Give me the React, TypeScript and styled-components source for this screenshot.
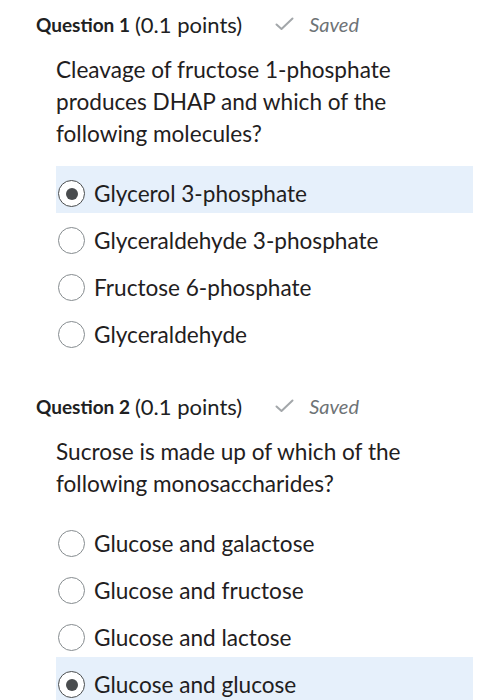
import styled, { createGlobalStyle } from 'styled-components'

const GlobalStyle = createGlobalStyle`
  html, body {
    margin: 0;
    padding: 0;
    background: #ffffff;
  }
  body {
    font-family: Lato, 'Open Sans', sans-serif;
    color: #202122;
  }
`

const Page = styled.main`
  width: 503px;
  height: 700px;
  overflow: hidden;
  display: flex;
  flex-direction: column;
  padding-top: 10px;
  box-sizing: border-box;
`

const QuestionBlock = styled.section`
  display: flex;
  flex-direction: column;
  margin-bottom: 38px;
`

const Header = styled.div`
  display: flex;
  align-items: center;
  height: 28px;
  padding-left: 36px;
  white-space: nowrap;
`

const QuestionLabel = styled.span`
  font-size: 19px;
  font-weight: 700;
  color: #202122;
`

const Points = styled.span`
  font-size: 22px;
  font-weight: 400;
  color: #202122;
  margin-left: 5px;
`

const SavedStatus = styled.span`
  display: flex;
  align-items: center;
  margin-left: 33px;
  gap: 15px;
  font-size: 20px;
  font-style: italic;
  color: #6e7376;
`

const Prompt = styled.p`
  margin: 16px 0 0;
  padding-left: 56px;
  width: 420px;
  font-size: 22.6px;
  line-height: 32px;
  color: #1f2021;
`

const Options = styled.div`
  display: flex;
  flex-direction: column;
  margin-top: 16px;
  padding-left: 56px;
  width: 417px;
`

const OptionRow = styled.label<{ $selected?: boolean }>`
  display: flex;
  align-items: center;
  height: 47px;
  padding-left: 2px;
  padding-top: 8px;
  box-sizing: border-box;
  background: ${p => (p.$selected ? '#e6f0fb' : 'transparent')};
`

const Radio = styled.span<{ $checked?: boolean }>`
  width: 27px;
  height: 27px;
  box-sizing: border-box;
  border-radius: 50%;
  border: 1.5px solid ${p => (p.$checked ? '#494c4e' : '#868c8f')};
  background: #fff;
  display: flex;
  align-items: center;
  justify-content: center;
  flex-shrink: 0;

  &::after {
    content: '';
    display: ${p => (p.$checked ? 'block' : 'none')};
    width: 12px;
    height: 12px;
    border-radius: 50%;
    background: #494c4e;
  }
`

const OptionText = styled.span`
  margin-left: 9px;
  font-size: 22.6px;
  color: #1f2021;
`

const Check = () => (
  <svg width="19" height="14" viewBox="0 0 19 14" fill="none">
    <path d="M1.5 7.5 L6.5 12 L17.5 1.5" stroke="#a3a7aa" strokeWidth="2" strokeLinecap="round" strokeLinejoin="round" />
  </svg>
)

type Question = {
  num: number
  prompt: string
  options: string[]
  selected: number
}

const QUESTIONS: Question[] = [
  {
    num: 1,
    prompt: 'Cleavage of fructose 1-phosphate produces DHAP and which of the following molecules?',
    options: ['Glycerol 3-phosphate', 'Glyceraldehyde 3-phosphate', 'Fructose 6-phosphate', 'Glyceraldehyde'],
    selected: 0,
  },
  {
    num: 2,
    prompt: 'Sucrose is made up of which of the following monosaccharides?',
    options: ['Glucose and galactose', 'Glucose and fructose', 'Glucose and lactose', 'Glucose and glucose'],
    selected: 3,
  },
]

const App = () => {
  return (
    <>
      <GlobalStyle />
      <Page>
        {QUESTIONS.map(q => (
          <QuestionBlock key={q.num}>
            <Header>
              <QuestionLabel>Question {q.num}</QuestionLabel>
              <Points>(0.1 points)</Points>
              <SavedStatus>
                <Check />
                Saved
              </SavedStatus>
            </Header>
            <Prompt>{q.prompt}</Prompt>
            <Options>
              {q.options.map((opt, i) => (
                <OptionRow key={opt} $selected={i === q.selected}>
                  <Radio $checked={i === q.selected} />
                  <OptionText>{opt}</OptionText>
                </OptionRow>
              ))}
            </Options>
          </QuestionBlock>
        ))}
      </Page>
    </>
  )
}

export default App
